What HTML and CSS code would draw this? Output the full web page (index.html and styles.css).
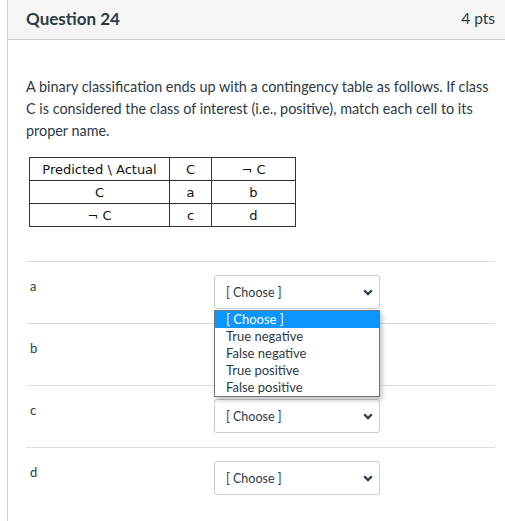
FILE: index.html
```html
<!DOCTYPE html>
<html>
<head>
<meta charset="utf-8">
<link rel="stylesheet" href="styles.css">
</head>
<body>
<div class="question">
  <div class="q-header">
    <span class="q-title">Question 24</span>
    <span class="q-pts">4 pts</span>
  </div>
  <div class="q-body">
    <p class="q-text">A binary classification ends up with a contingency table as follows. If class C is considered the class of interest (i.e., positive), match each cell to its proper name.</p>
    <table class="ctable">
      <tr><td class="c1">Predicted \ Actual</td><td class="c2">C</td><td class="c3">¬ C</td></tr>
      <tr><td class="c1">C</td><td class="c2">a</td><td class="c3">b</td></tr>
      <tr><td class="c1">¬ C</td><td class="c2">c</td><td class="c3">d</td></tr>
    </table>
    <div class="answers">
      <div class="arow">
        <div class="alabel">a</div>
        <div class="selwrap">
          <div class="select"><span>[ Choose ]</span><svg class="chev" width="10" height="7" viewBox="0 0 10 7"><path d="M1.2 1.3 L5 5.1 L8.8 1.3" fill="none" stroke="#2d3b45" stroke-width="2.2"/></svg></div>
          <div class="menu">
            <div class="opt sel">[ Choose ]</div>
            <div class="opt">True negative</div>
            <div class="opt">False negative</div>
            <div class="opt">True positive</div>
            <div class="opt">False positive</div>
          </div>
        </div>
      </div>
      <div class="arow">
        <div class="alabel">b</div>
        <div class="selwrap">
          <div class="select"><span>[ Choose ]</span><svg class="chev" width="10" height="7" viewBox="0 0 10 7"><path d="M1.2 1.3 L5 5.1 L8.8 1.3" fill="none" stroke="#2d3b45" stroke-width="2.2"/></svg></div>
        </div>
      </div>
      <div class="arow">
        <div class="alabel">c</div>
        <div class="selwrap">
          <div class="select"><span>[ Choose ]</span><svg class="chev" width="10" height="7" viewBox="0 0 10 7"><path d="M1.2 1.3 L5 5.1 L8.8 1.3" fill="none" stroke="#2d3b45" stroke-width="2.2"/></svg></div>
        </div>
      </div>
      <div class="arow">
        <div class="alabel">d</div>
        <div class="selwrap">
          <div class="select"><span>[ Choose ]</span><svg class="chev" width="10" height="7" viewBox="0 0 10 7"><path d="M1.2 1.3 L5 5.1 L8.8 1.3" fill="none" stroke="#2d3b45" stroke-width="2.2"/></svg></div>
        </div>
      </div>
    </div>
  </div>
</div>
</body>
</html>
```
FILE: styles.css
```css
html, body {
  margin: 0;
  padding: 0;
  background: #ffffff;
}
body {
  font-family: Lato, "Open Sans", sans-serif;
  color: #2d3b45;
  height: 521px;
  overflow: hidden;
}
.question {
  margin-left: 7px;
  border-left: 1px solid #c7cdd1;
  min-height: 521px;
  box-sizing: border-box;
}
.q-header {
  height: 40px;
  box-sizing: border-box;
  background: #f5f5f5;
  border-bottom: 1px solid #c7cdd1;
  display: flex;
  justify-content: space-between;
  align-items: center;
  padding: 0 10px 3px 18px;
}
.q-title {
  font-size: 17px;
  font-weight: 700;
}
.q-pts {
  font-size: 15.5px;
}
.q-body {
  padding: 36px 12px 0 18px;
}
.q-text {
  margin: 0;
  font-size: 14.4px;
  line-height: 22px;
}
.ctable {
  margin: 15px 0 0 3px;
  border-collapse: collapse;
  font-family: "DejaVu Sans", Verdana, sans-serif;
  font-size: 13px;
  color: #111;
}
.ctable td {
  border: 1.5px solid #333;
  height: 22px;
  padding: 0;
  text-align: center;
}
.c1 { width: 139px; }
.c2 { width: 41px; }
.c3 { width: 83px; }
.answers {
  margin-top: 34px;
}
.arow {
  border-top: 1px solid #dddddd;
  display: flex;
  align-items: flex-start;
  padding: 13px 0 14px 0;
  margin-right: -2px;
}
.alabel {
  width: 184px;
  padding-left: 4px;
  font-size: 13px;
  line-height: 22px;
}
.selwrap {
  position: relative;
}
.select {
  width: 166px;
  height: 34px;
  box-sizing: border-box;
  border: 1px solid #c7cdd1;
  border-radius: 3px;
  display: flex;
  align-items: center;
  justify-content: space-between;
  padding: 0 6px 0 11px;
  font-size: 12.5px;
  background: #fff;
}
.chev {
  display: block;
}
.menu {
  position: absolute;
  left: 0;
  top: 35px;
  width: 166px;
  box-sizing: border-box;
  border: 1px solid #767676;
  background: #fff;
  box-shadow: 2px 3px 5px rgba(0, 0, 0, 0.25);
  z-index: 2;
}
.opt {
  height: 17px;
  line-height: 17px;
  padding-left: 11px;
  font-size: 13px;
  color: #2d3b45;
}
.opt.sel {
  background: #0a95ff;
  color: #ffffff;
}
```
